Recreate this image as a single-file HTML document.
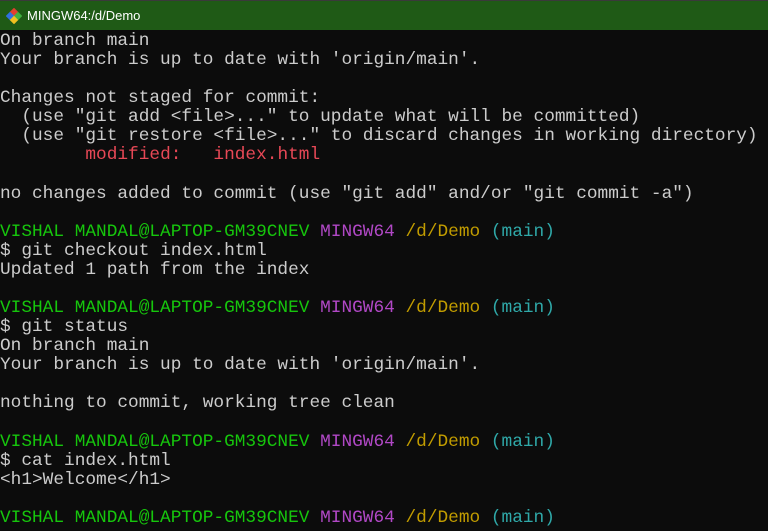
<!DOCTYPE html><html><head><style>
body{margin:0;width:768px;height:531px;background:#0c0c0c;overflow:hidden;position:relative}
.t{height:30px;background:#1f5a16;border-top:1px solid #3a3a3a;box-sizing:border-box;color:#fff;font:13px "Liberation Sans",sans-serif;display:flex;align-items:center}
.t svg{margin:0 5px 0 6px}
pre{margin:0;position:absolute;top:32px;left:0;font:17.8px/19.08px "Liberation Mono",monospace;color:#cccccc}
.g{color:#16c60c}.m{color:#b148c6}.y{color:#c19c00}.c{color:#2fa8a8}.r{color:#e74856}
</style></head><body>
<div class="t"><svg width="16" height="16" viewBox="0 0 16 16"><rect x="5" y="1" width="6" height="6" transform="rotate(45 8 4)" fill="#e04030"/><rect x="1" y="5" width="6" height="6" transform="rotate(45 4 8)" fill="#3070e0"/><rect x="9" y="5" width="6" height="6" transform="rotate(45 12 8)" fill="#40b040"/><rect x="5" y="9" width="6" height="6" transform="rotate(45 8 12)" fill="#f0c020"/></svg>MINGW64:/d/Demo</div>
<pre>On branch main
Your branch is up to date with 'origin/main'.

Changes not staged for commit:
  (use "git add &lt;file&gt;..." to update what will be committed)
  (use "git restore &lt;file&gt;..." to discard changes in working directory)
        <span class="r">modified:   index.html</span>

no changes added to commit (use "git add" and/or "git commit -a")

<span class="g">VISHAL MANDAL@LAPTOP-GM39CNEV</span> <span class="m">MINGW64</span> <span class="y">/d/Demo</span> <span class="c">(main)</span>
$ git checkout index.html
Updated 1 path from the index

<span class="g">VISHAL MANDAL@LAPTOP-GM39CNEV</span> <span class="m">MINGW64</span> <span class="y">/d/Demo</span> <span class="c">(main)</span>
$ git status
On branch main
Your branch is up to date with 'origin/main'.

nothing to commit, working tree clean

<span class="g">VISHAL MANDAL@LAPTOP-GM39CNEV</span> <span class="m">MINGW64</span> <span class="y">/d/Demo</span> <span class="c">(main)</span>
$ cat index.html
&lt;h1&gt;Welcome&lt;/h1&gt;

<span class="g">VISHAL MANDAL@LAPTOP-GM39CNEV</span> <span class="m">MINGW64</span> <span class="y">/d/Demo</span> <span class="c">(main)</span>
</pre>
</body></html>
